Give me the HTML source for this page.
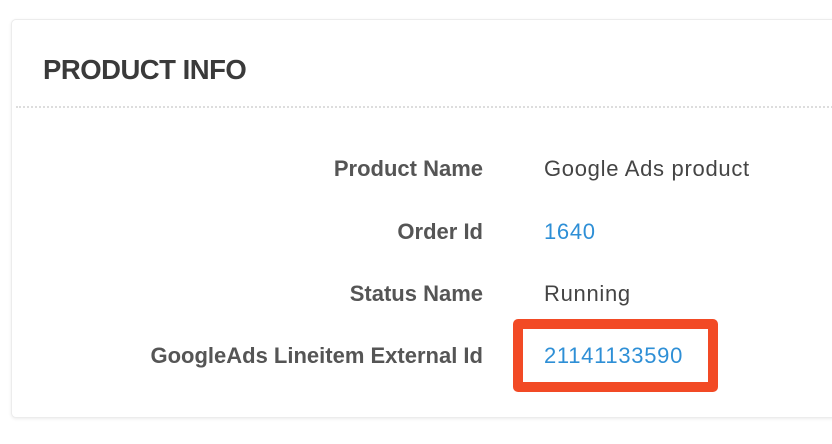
<!DOCTYPE html>
<html><head><style>
html,body{margin:0;padding:0;background:#fff;width:832px;height:444px;overflow:hidden;font-family:"Liberation Sans",sans-serif}
.card{position:absolute;left:11px;top:19px;width:840px;height:397px;border:1px solid #ececec;border-radius:5px;box-shadow:0 1px 3px rgba(0,0,0,0.08);background:#fff}
.title{position:absolute;left:31px;top:34px;font-size:27.5px;font-weight:bold;color:#3a3a3a;letter-spacing:-0.5px}
.sep{position:absolute;left:4px;right:0;top:86px;border-top:2px dotted #ddd}
.lab{position:absolute;right:369px;font-size:22px;font-weight:bold;color:#555;white-space:nowrap}
.val{position:absolute;left:532px;font-size:22px;letter-spacing:0.7px;color:#444;white-space:nowrap}
.blue{color:#2e8fd6}
.box{position:absolute;left:513px;top:319px;width:185px;height:53px;border:10px solid #f24a25;border-radius:5px}
</style></head><body>
<div class="card">
<div class="title">PRODUCT INFO</div>
<div class="sep"></div>
<div class="lab" style="top:136px">Product Name</div><div class="val" style="top:136px">Google Ads product</div>
<div class="lab" style="top:199px">Order Id</div><div class="val blue" style="top:199px">1640</div>
<div class="lab" style="top:261px">Status Name</div><div class="val" style="top:261px">Running</div>
<div class="lab" style="top:323px">GoogleAds Lineitem External Id</div><div class="val blue" style="top:323px">21141133590</div>
</div>
<div class="box"></div>
</body></html>
